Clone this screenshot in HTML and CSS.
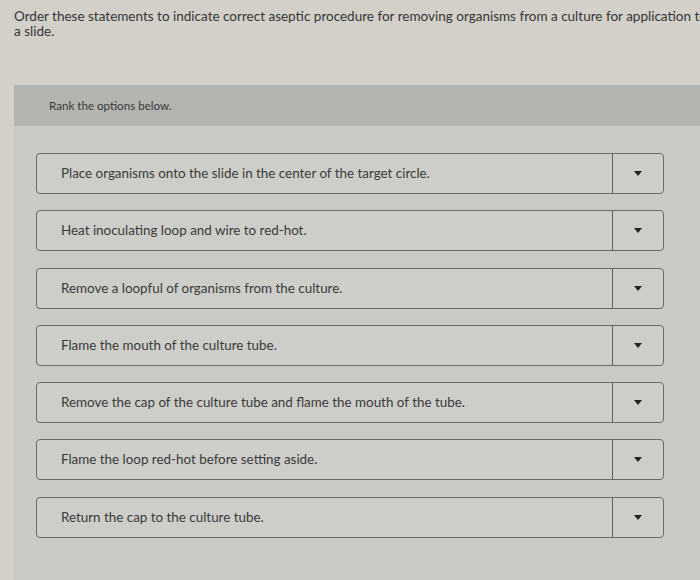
FILE: index.html
```html
<!DOCTYPE html>
<html>
<head>
<meta charset="utf-8">
<link rel="stylesheet" href="styles.css">
</head>
<body>
<div class="page">
  <p class="question">Order these statements to indicate correct aseptic procedure for removing organisms from a culture for application to a slide.</p>
  <div class="panel">
    <div class="band">Rank the options below.</div>
    <div class="list">
      <div class="item"><div class="label">Place organisms onto the slide in the center of the target circle.</div><div class="drop"><span class="arrow"></span></div></div>
      <div class="item"><div class="label">Heat inoculating loop and wire to red-hot.</div><div class="drop"><span class="arrow"></span></div></div>
      <div class="item"><div class="label">Remove a loopful of organisms from the culture.</div><div class="drop"><span class="arrow"></span></div></div>
      <div class="item"><div class="label">Flame the mouth of the culture tube.</div><div class="drop"><span class="arrow"></span></div></div>
      <div class="item"><div class="label">Remove the cap of the culture tube and flame the mouth of the tube.</div><div class="drop"><span class="arrow"></span></div></div>
      <div class="item"><div class="label">Flame the loop red-hot before setting aside.</div><div class="drop"><span class="arrow"></span></div></div>
      <div class="item"><div class="label">Return the cap to the culture tube.</div><div class="drop"><span class="arrow"></span></div></div>
    </div>
  </div>
</div>
</body>
</html>
```
FILE: styles.css
```css
html, body {
  margin: 0;
  padding: 0;
  width: 700px;
  height: 580px;
  overflow: hidden;
  background: #d2d0c9;
  font-family: Lato, "Open Sans", sans-serif;
  color: #333;
}
.page {
  width: 700px;
  height: 580px;
}
.question {
  margin: 0;
  padding: 9px 0 0 14px;
  width: 700px;
  font-size: 13.5px;
  line-height: 15px;
  height: 76px;
  color: #363636;
}
.panel {
  margin-left: 14px;
  background: #c9cac5;
  height: 495px;
}
.band {
  height: 41px;
  background: #b3b4b0;
  padding-left: 35px;
  font-size: 11.6px;
  line-height: 41px;
  box-sizing: border-box;
  color: #383838;
}
.list {
  padding: 27px 0 0 22px;
  display: flex;
  flex-direction: column;
  gap: 16.3px;
}
.item {
  width: 628px;
  height: 41px;
  box-sizing: border-box;
  border: 1px solid #6a6a68;
  border-radius: 4px;
  background: #cdcec9;
  display: flex;
}
.label {
  flex: 1;
  padding-left: 24px;
  font-size: 13.4px;
  line-height: 39px;
  color: #3a3a3a;
}
.drop {
  width: 50px;
  border-left: 1px solid #5e5e5c;
  display: flex;
  align-items: center;
  justify-content: center;
}
.arrow {
  width: 0;
  height: 0;
  border-left: 4px solid transparent;
  border-right: 4px solid transparent;
  border-top: 5px solid #1f2328;
}
```
